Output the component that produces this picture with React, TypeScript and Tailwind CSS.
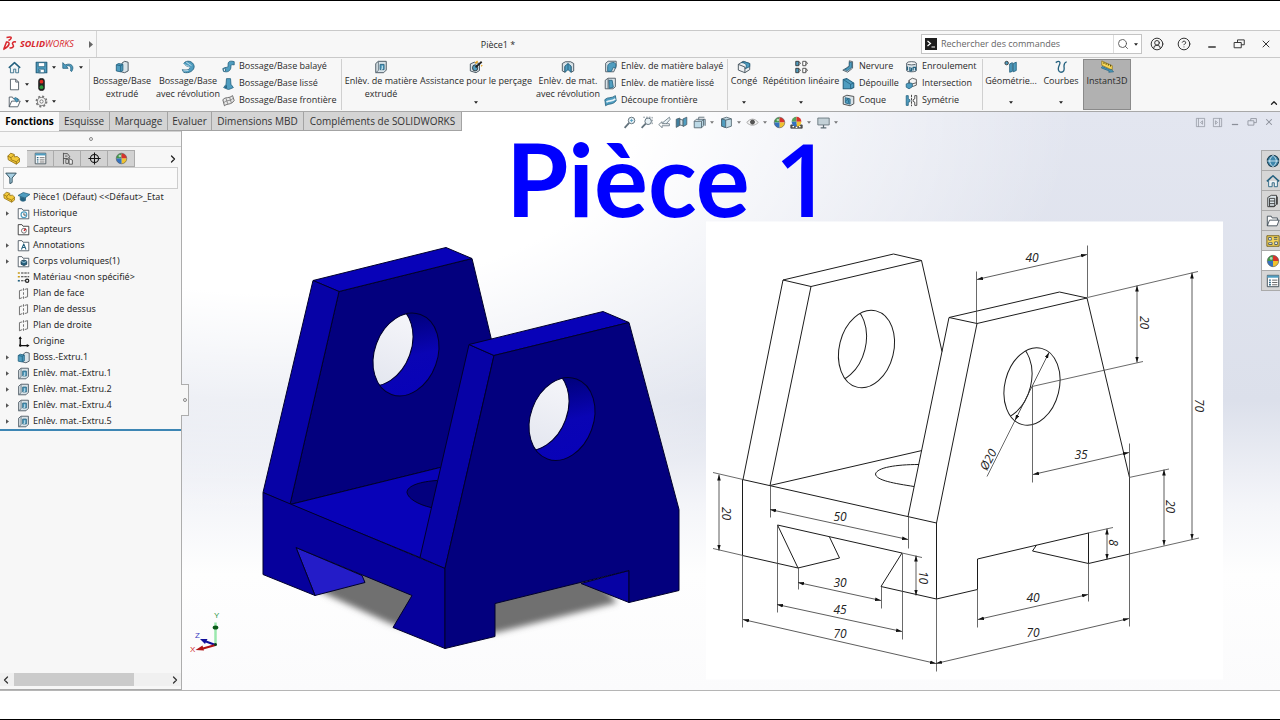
import type { ReactNode } from "react";
import {
  ChevronLeft,
  ChevronRight,
  ChevronUp,
  CircleHelp,
  CircleUserRound,
  Search,
  X,
} from "lucide-react";

/* ---------- small drawings ---------- */

function Ico({ children, className = "size-3.5" }: { children: ReactNode; className?: string }) {
  return (
    <svg
      viewBox="0 0 16 16"
      className={`shrink-0 ${className}`}
      fill="none"
      stroke="#3d4a55"
      strokeWidth="1"
      strokeLinejoin="round"
      aria-hidden="true"
    >
      {children}
    </svg>
  );
}

const BLUE = "#4f9dc0";
const DEEP = "#24617f";
const PALE = "#d9e3e8";

const icons = {
  home: (
    <>
      <path d="M3 8v6.5h4V10h2.5v4.5H13V8" fill="#eef3f6" stroke={DEEP} />
      <path d="M1 8.5 8 2l7 6.5" stroke={DEEP} strokeWidth="1.8" />
    </>
  ),
  save: (
    <>
      <path d="M1.5 1.5h13v13h-13z" fill={BLUE} stroke={DEEP} strokeWidth="1.4" />
      <path d="M4 2h8v5H4zM4.500 10h7v4.500h-7z" fill="#fff" stroke={DEEP} />
      <path d="M6 11v3" stroke={DEEP} strokeWidth="1.6" />
    </>
  ),
  undo: (
    <path
      d="M1 2v7h6.500L5.300 6.700C9 4.500 12 6.500 10.500 12l1.300 1C16 7 11.500 1.500 3.800 4.900z"
      fill={BLUE}
      stroke={DEEP}
    />
  ),
  page: <path d="M3 1.500h6.500L13 5v9.500H3zM9.500 1.500V5H13" fill="#fff" />,
  light: (
    <>
      <rect x="4.500" y="0.500" width="7" height="15" rx="3" fill="#222" stroke="#222" />
      <circle cx="8" cy="4.500" r="2.300" fill="#e02a20" stroke="none" />
      <circle cx="8" cy="11.300" r="2.300" fill="#2c9a3c" stroke="none" />
    </>
  ),
  open: (
    <>
      <path d="M1.500 14.500V2.500h4l1 2H12v3M1.500 14.500l3-7h10.500l-3 7z" fill="#fff" />
      <path d="M7 5c2-3 4-2 4.500.500h2L10.700 9 8 5.500h1.500" fill={BLUE} stroke={DEEP} strokeWidth=".7" />
    </>
  ),
  gear: (
    <>
      <circle cx="8" cy="8" r="6.300" strokeWidth="2" strokeDasharray="2.500 2.450" stroke="#777" />
      <circle cx="8" cy="8" r="5" fill="#f4f4f4" stroke="#666" />
      <circle cx="8" cy="8" r="2" fill="#fff" stroke="#666" />
    </>
  ),
  boss: (
    <>
      <path d="M8 3.500 11 1.500l4 1v10l-4 2-4-1z" fill={PALE} />
      <path d="M1.500 5.500 4 4l5 1v7l-2.500 1.500-5-1z" fill={BLUE} stroke={DEEP} />
      <path d="M1.500 5.500l5 1L9 5M6.500 6.500v7" stroke={DEEP} />
    </>
  ),
  revolve: (
    <>
      <path
        d="M3 4C6-.5 14 1 15 7c.5 5-6 9-12 7l-1.500-3c4 1 8 .5 8.500-2 0-2-4-1-7-5z"
        fill={BLUE}
        stroke={DEEP}
      />
      <path d="M3 4c2 3 7 2 7 5M6 2.500l6 4M2.500 12.500l6-.5" stroke="#cfe6f0" />
    </>
  ),
  sweep: (
    <>
      <path
        d="M1 10.500 5 9c2.500.800 2.500-.500 2.500-4C7.500 1 11 1 15 2v4c-3-.500-4-.500-4 2 0 6-4.500 7.500-9 6z"
        fill={BLUE}
        stroke={DEEP}
      />
      <ellipse cx="3" cy="12.200" rx="1.500" ry="2" fill={PALE} stroke={DEEP} />
    </>
  ),
  loft: (
    <>
      <path d="M5.500 2h5l.500 7 3 4-6 2.500L2 13l3-4z" fill={BLUE} stroke={DEEP} />
      <path d="M6 2.500v7l-3 3.500 3 1z" fill={DEEP} stroke="none" />
    </>
  ),
  boundary: (
    <>
      <path d="M1 7c3-4 8-1 12-5l2 6c-4 6-8 3-12 6.500z" fill="#e8e8e8" stroke="#555" />
      <path d="M2.500 10.500c4-4 8-1 11.500-5.500M5 5.500l2 6.500M9.500 4.500l2 6.500" stroke="#777" />
    </>
  ),
  cut: (
    <>
      <path d="M2 4 5 1.500h9v10L11 14.500H2z" fill={PALE} />
      <path d="M5 1.500V12l-3 2.500" stroke="#60707a" />
      <path d="M7 5h4.500v6H7z" fill={BLUE} stroke={DEEP} />
      <path d="M9.500 6.500v4H8" stroke="#e6f3f8" />
    </>
  ),
  hole: (
    <>
      <path d="M1.500 4.500 6 2.500l6 1.500v8L8 14.500l-6.500-2z" fill={PALE} />
      <ellipse cx="7" cy="9" rx="3" ry="3.500" fill={BLUE} stroke="#333" />
      <path d="m7.500 8.500 7-6.500" stroke="#222" strokeWidth="2" />
      <path d="m9 1 .5 2M14 6l1 1M7 3l2 .5" stroke="#e9a620" strokeWidth="1.800" />
    </>
  ),
  cutRev: (
    <>
      <path d="M1.500 4 5 2l6 0 3.500 2v8.500l-3 1.500V7.500L8 5 4.500 7.500V14l-3-1.500z" fill={PALE} />
      <path d="M4.500 7 8 4l3.500 3v7L8 11l-3.500 3z" fill={BLUE} stroke={DEEP} />
      <path d="M8 4v7" stroke={DEEP} />
    </>
  ),
  cutSweep: (
    <>
      <path d="M2 4 5 1.500h10v6L12 14.500H2z" fill={PALE} />
      <path d="M4.500 14V8c0-3 3-5 8-5l2 2v5l-3-1-2.500 5z" fill={BLUE} stroke={DEEP} />
    </>
  ),
  cutLoft: (
    <>
      <path d="M1.500 4 5 1.500h9v10.500L11 14.500H1.500z" fill={PALE} />
      <path d="M6 4h4l1.500 8.500-5 1.500z" fill={BLUE} stroke={DEEP} />
      <path d="M5 2v12" />
    </>
  ),
  cutBound: (
    <>
      <path d="M1 7c4-4 8-1 13-5l1 6c-4 6-9 3-13 6.500z" fill={BLUE} stroke={DEEP} />
      <path d="M3 10c4-3 6 0 11-4" stroke="#e6f3f8" strokeWidth="2" />
    </>
  ),
  fillet: (
    <>
      <path d="M1.500 5 7 1.500l7.500 2.500v7L9 14.500l-7.500-3z" fill="#eef1f3" />
      <path d="M5 3c5 0 7 3 4.500 7l5-2.500V4L8.500 2z" fill={BLUE} stroke={DEEP} />
      <path d="M1.500 5 9 8v6.500" />
    </>
  ),
  pattern: (
    <>
      <path d="M2 1.500h3.500v5H2zM2 9.500h3.500v5H2z" fill={BLUE} stroke="#333" />
      <path d="M10 1.500h3.500v5H10zM10 9.500h3.500v5H10z" fill="#fff" stroke="#444" />
      <path d="m5.500 2 2 1.500-2 2M5.500 10l2 1.500-2 2M13.500 2l2 1.500-2 2M13.500 10l2 1.500-2 2" stroke="#444" />
    </>
  ),
  rib: (
    <>
      <path d="m9 1 4 1v8l-6 5-6-2.500 5-3L9 7z" fill={PALE} />
      <path d="M9 3v5l-6 4 4 1 5-4V3z" fill={BLUE} stroke={DEEP} />
    </>
  ),
  draft: (
    <>
      <path d="M1.500 3 6 2l8.500 5.500V13L11 14.500H1.500z" fill={BLUE} stroke={DEEP} strokeWidth="1.300" />
      <path d="m1.500 3 9 6v5.500M10.500 9l4-1.500" stroke={DEEP} />
    </>
  ),
  shell: (
    <>
      <path d="M1.500 3.500 6 1.500l8.500 1.500V12L10 14.500l-8.500-2z" fill={PALE} stroke="#333" />
      <path d="M4 4.500 10 6v6.500L4 11z" fill={BLUE} stroke={DEEP} />
      <path d="m7 5 1.500 6M4 9l4-3.500" stroke={DEEP} />
    </>
  ),
  wrap: (
    <>
      <path d="M2 4v9c0 2 12 2 12 0V4" fill={PALE} />
      <ellipse cx="8" cy="4" rx="6" ry="2" fill="#f6f6f6" />
      <path d="M3 8v4.500M6 8.500v5h2v-4M10 13V9h3v4" stroke={DEEP} strokeWidth="1.500" />
    </>
  ),
  intersect: (
    <>
      <path d="M5 4 9 1.500l5 1.500v7l-4 1.500-5-1z" fill="#f4f4f4" stroke="#444" />
      <path d="M1.500 8.500 5 7l4 1v4l-4 2.500-3.500-2z" fill={BLUE} stroke={DEEP} />
      <path d="M5 4v4M9 8.500l5-1.500" stroke="#444" />
    </>
  ),
  mirror: (
    <>
      <path d="M1.500 2v12M1.500 2h2.500v4l2 1v2.500L4 10v4H1.500" fill={BLUE} stroke={DEEP} />
      <path d="M8 1v14" stroke="#222" strokeDasharray="3 1" />
      <path d="M14.500 2v12H12v-4l-2-1V7l2-1V2z" fill="#fff" stroke="#333" />
    </>
  ),
  refgeo: (
    <>
      <circle cx="3" cy="3.500" r="2" fill={BLUE} stroke="#333" />
      <path d="m6.500 4.500 3-1.500v10L6.500 14zM10.500 4 14 2.500v9.500l-3.500 1.500z" fill={BLUE} stroke={DEEP} />
    </>
  ),
  curves: (
    <path
      d="M2 3c4-3 6-1 4 3-2 4-1 8 2 8s4-2 3.500-6C11 4 12 3 14.500 2"
      stroke={DEEP}
      strokeWidth="1.500"
    />
  ),
  instant: (
    <>
      <path d="m2 1 12 5.500v5L2 6z" fill="#f7d858" stroke="#8a7018" strokeWidth=".8" />
      <path d="m4.500 2.500v2M7 3.500v2M9.500 4.500v2M12 5.500v2" stroke="#4b3d08" />
      <path d="m1.500 9 9 3.500-.5 1.500 5.500-.5-3-3-.5 1-9.500-4z" fill={BLUE} stroke={DEEP} strokeWidth=".8" />
    </>
  ),
  zoomFit: (
    <>
      <circle cx="10.500" cy="5.500" r="4" fill="#e9f2f6" stroke="#62727c" strokeWidth="1.200" />
      <path d="M7.500 8.500 2 14.500" stroke="#62727c" strokeWidth="2.200" />
      <path d="M8.500 5.500h4M10.500 3.500v4" stroke={BLUE} />
    </>
  ),
  zoomArea: (
    <>
      <circle cx="10" cy="6.500" r="4" fill="#e9f2f6" stroke="#62727c" strokeWidth="1.200" />
      <path d="M7 9.500 2 14.500" stroke="#62727c" strokeWidth="2.200" />
      <path d="M4 1.500h11v9" stroke="#62727c" strokeDasharray="2 1.500" />
    </>
  ),
  prevView: (
    <>
      <path d="M14 1.500 6 8l3 3 6-7z" fill="#e9f2f6" stroke="#62727c" />
      <path d="M1 10.500 5 7v2.500h9v2.500H5v2.500z" fill="#fff" stroke="#62727c" />
    </>
  ),
  section: (
    <>
      <path d="M1.500 4 6 2.500v9L1.500 14z" fill="#3f7f9f" stroke="#4a5c68" />
      <path d="m6 4 4 1v7l-4-1z" fill={PALE} stroke="#4a5c68" />
      <path d="m10 3.500 4.500-2v9L10 13z" fill={BLUE} stroke="#4a5c68" />
    </>
  ),
  orient: (
    <>
      <path d="M4 4h11v8M4 4 1.500 6.500v8h9V6.500h-9M10.500 6.500 13 4V12l-2.500 2.500" fill="#bcd9e6" stroke="#4a5c68" />
      <path d="M7 4V1.500M7 1.500h7" stroke="#4a5c68" />
    </>
  ),
  style: (
    <>
      <path d="M2 3.500 8 1.500l6 2v9l-6 2-6-2z" fill="#c4dce6" stroke="#4a5c68" />
      <path d="m2 3.500 5 1.500v9.200l-5-1.700z" fill={BLUE} stroke="#4a5c68" />
      <path d="m7 5 7-1.500" stroke="#4a5c68" />
    </>
  ),
  eye: (
    <>
      <path d="M1 8c4-5.500 10-5.500 14 0-4 4.500-10 4.500-14 0z" fill="#f2f2f2" stroke="#999" />
      <circle cx="8" cy="7.500" r="2.500" fill="#555" stroke="#444" />
    </>
  ),
  ball: (
    <>
      <path d="M8 8V1.500A6.500 6.500 0 0 0 1.500 8z" fill="#3f9a4b" stroke="none" />
      <path d="M8 8V1.500A6.500 6.500 0 0 1 14.500 8z" fill="#d8322c" stroke="none" />
      <path d="M8 8v6.500A6.500 6.500 0 0 0 14.500 8z" fill="#f0c22e" stroke="none" />
      <path d="M8 8v6.500A6.500 6.500 0 0 1 1.500 8z" fill="#3472c0" stroke="none" />
      <circle cx="8" cy="8" r="6.500" stroke="#555" strokeWidth=".7" />
      <circle cx="6" cy="5" r="1.600" fill="#fff" fillOpacity=".6" stroke="none" />
    </>
  ),
  scene: (
    <>
      <path d="M1 11h14v4H1z" fill="#555" stroke="#444" />
      <path d="M8 7V1A6 6 0 0 0 2 7z" fill="#58a05a" stroke="none" />
      <path d="M8 7V1a6 6 0 0 1 6 6z" fill="#d8322c" stroke="none" />
      <path d="M8 7v6a6 6 0 0 0 6-6z" fill="#f0c22e" stroke="none" />
      <path d="M8 7v6a6 6 0 0 1-6-6z" fill="#3472c0" stroke="none" />
      <path d="M3 13h2M7 14h2M11 13h2" stroke="#fff" strokeWidth="1.500" />
    </>
  ),
  screen: (
    <>
      <path d="M1 2.500h14v8.500H1z" fill="#c3d0d7" stroke="#5c6a73" />
      <path d="M8 11v3M4.500 14.500h7" stroke="#5c6a73" strokeWidth="1.500" />
    </>
  ),
  part: (
    <>
      <path d="M1 5 4.500 1.500 9 3v3l3.500-.500L15.500 8v4l-4 3L1.500 9.500z" fill="#f3c93a" stroke="#8f6d10" />
      <path d="m1 5 4 2v2.500l6.500 2.500v3M5 7l3-3M11.500 12l4-3.500" stroke="#8f6d10" />
    </>
  ),
  list: (
    <>
      <path d="M1.500 1.500h13v13h-13z" fill="#fff" stroke="#37474f" />
      <path d="M1.500 3h13" stroke={BLUE} strokeWidth="2.500" />
      <path d="M3.500 7h2M3.500 9.700h2M3.500 12.300h2" stroke={DEEP} strokeWidth="1.500" />
      <path d="M7 7h6M7 9.700h6M7 12.300h6" stroke="#555" />
    </>
  ),
  config: (
    <>
      <path d="M3 1v14M3 2h5l3 4-3 2H3M5 5h3" stroke="#444" />
      <path d="M6 9h3v5H6zM10 8l4 2v5h-4z" fill="#eee" stroke="#444" />
    </>
  ),
  target: (
    <>
      <circle cx="8" cy="8" r="5" stroke="#111" strokeWidth="1.300" />
      <path d="M8 .5v15M.5 8h15" stroke="#111" strokeWidth="1.300" />
    </>
  ),
  funnel: <path d="M1 1.500h14L9.500 8v6l-3 1.500V8z" fill="#a8d0e3" stroke="#31505f" strokeWidth="1.300" />,
  cap: (
    <>
      <path d="M0 6 7 2l9 2.500L9 9.500z" fill={BLUE} stroke={DEEP} />
      <path d="M3 8v4c2 2 5 2 7 .5V9L9 9.500z" fill={DEEP} stroke={DEEP} />
    </>
  ),
  folderHist: (
    <>
      <path d="M1.500 14.500V2H6l1.500 2h7v10.500z" fill="#fff" />
      <circle cx="8.500" cy="9.500" r="3.500" stroke={BLUE} strokeWidth="1.500" />
      <path d="M8.500 7.500v2.500H11" stroke="#333" />
    </>
  ),
  folderSensor: (
    <>
      <path d="M1.500 14.500V2H6l1.500 2h7v10.500z" fill="#fff" stroke="#222" />
      <circle cx="8.500" cy="9.500" r="3" stroke="#555" />
      <path d="m8.500 9.500 2.500-2.500" stroke="#c8202a" strokeWidth="1.800" />
    </>
  ),
  folderNote: (
    <>
      <path d="M1.500 14.500V2H6l1.500 2h7v10.500z" fill="#fff" />
      <path d="m5.500 13 2.800-7 2.800 7M6.500 10.500h3.600" stroke={DEEP} strokeWidth="1.300" />
    </>
  ),
  folderBody: (
    <>
      <path d="M1.500 14.500V2H6l1.500 2h7v10.500z" fill="#fff" />
      <path d="M5 7.500 8.500 6 12 7.500v4L8.500 13 5 11.500z" fill={DEEP} stroke="#12384c" />
      <path d="m5.500 8 3 1.200 3-1.200" stroke="#bfe0ee" />
    </>
  ),
  material: (
    <>
      <path d="M1 2.500h2.500M1 7h2.500" stroke="#c89a16" strokeWidth="2" />
      <path d="M1 12h2.500" stroke={DEEP} strokeWidth="2" />
      <path d="M5 2.500h10M5 7h10M5 12h5" stroke="#333" strokeWidth="1.300" strokeDasharray="3 1" />
      <circle cx="12.500" cy="12" r="2" stroke="#222" strokeWidth="1.500" />
    </>
  ),
  plane: (
    <path d="M6.500 3.500 3 4.500v10L6.500 13M9.500 3 13 2v10l-3.500 1M8 1.500v3M8 6.500v3M8 11.500v3" stroke="#555" />
  ),
  origin: (
    <>
      <path d="M4 2.500V13h10" stroke="#111" strokeWidth="1.600" />
      <path d="m2 5 2-3.500L6 5zM12 11l3.500 2-3.500 2z" fill="#111" stroke="none" />
      <circle cx="4" cy="13" r="1.500" fill="#111" stroke="none" />
    </>
  ),
  globe: (
    <>
      <circle cx="8" cy="8" r="6.500" fill="#3e87ab" stroke="#1c3f52" strokeWidth="1.200" />
      <path d="M1.500 8h13M8 1.500c-5 4-5 9 0 13M8 1.500c5 4 5 9 0 13" stroke="#d7ecf5" />
    </>
  ),
  library: (
    <>
      <path d="M2 4 6 1.500h6V12l-3 2.500H2z" fill={PALE} stroke="#333" />
      <path d="M4 5h6v9H4zM4 8h6M4 11h6M13 3v9" stroke="#333" />
    </>
  ),
  folder: <path d="M1.500 13.500V2.500H6l1 2h6v2.500M1.500 13.500l2.500-6.500h11l-2.500 6.500z" fill="#fff" />,
  palette: (
    <>
      <path d="M1 2h14v12H1z" fill="#f3d35b" stroke="#6e5a12" />
      <path d="M3 4h3v3H3zM9 4h4M9 6h4M3 10h4v2H3zM10 9h3v3h-3z" fill="#fff" stroke="#44555e" />
    </>
  ),
  paneL: <path d="M2 2h12v12H2zM5 2v12M11 5.500 8 8l3 2.500z" stroke="#8b8f99" />,
  paneR: <path d="M2 2h12v12H2zM11 2v12M5 5.500 8 8l-3 2.500z" stroke="#8b8f99" />,
  min: <path d="M3 12h10" stroke="currentColor" strokeWidth="2" />,
  restore: <path d="M6 6V2.500h9V9h-4M1.500 6H11v7H1.500z" stroke="currentColor" strokeWidth="1.300" />,
};

type IconName = keyof typeof icons;

function Glyph({ name, className }: { name: IconName; className?: string }) {
  return <Ico className={className}>{icons[name]}</Ico>;
}

function Caret({ className = "" }: { className?: string }) {
  return (
    <svg viewBox="0 0 6 4" className={`h-[3px] w-1 shrink-0 ${className}`} aria-hidden="true">
      <path d="M0 0h6L3 4z" fill="#222" />
    </svg>
  );
}

/* ---------- title bar ---------- */

function TitleBar() {
  return (
    <header className="flex h-7 shrink-0 items-stretch border-y border-[#c9c9c9] bg-[#f7f7f7]">
      <div className="flex w-[97px] items-center border-r border-[#d4d4d4] pl-[3px]">
        <svg viewBox="0 0 14 16" className="h-4 w-3.5" fill="none" stroke="#d8262c" strokeWidth="1.500" aria-hidden="true">
          <path d="M3.500 1.500 7 1c2 0 1.500 2-1.500 3.500M1 12.500 3.500 6c4-.5 3.500 4-2.500 7z" />
          <path d="M13 6c-3-.6-4.500 1-3 2.800 1.500 2-.5 3.400-3.500 3" />
        </svg>
        <span className="ml-[3px] w-[69px] text-[9px] italic text-[#d8262c]">
          <b>SOLID</b>WORKS
        </span>
        <button aria-label="Menu" className="flex items-center">
          <svg viewBox="0 0 4 7" className="h-[7px] w-1" aria-hidden="true">
            <path d="M0 0v7l4-3.500z" fill="#666" />
          </svg>
        </button>
      </div>
      <h1 className="flex flex-1 items-center justify-center pr-[22px] pt-px text-[9px]">Pièce1 *</h1>
      <div className="flex items-center">
        <label className="flex h-5 w-[221px] items-center border border-[#c4c4c4] bg-white pl-[3px]">
          <svg viewBox="0 0 12 12" className="size-3 shrink-0" aria-hidden="true">
            <path d="M0 0h12v12H0z" fill="#1e1e1e" />
            <path d="m2.500 3 3 2.500-3 2.500M6.500 9H10" fill="none" stroke="#fff" strokeWidth="1.200" />
          </svg>
          <input
            type="text"
            aria-label="Rechercher des commandes"
            placeholder="Rechercher des commandes"
            className="ml-1 min-w-0 flex-1 bg-transparent text-[9px] outline-none placeholder:text-[#666]"
          />
          <span className="flex h-full w-7 items-center justify-center gap-[5px] border-l border-[#ddd]">
            <Search className="size-3 text-[#555]" strokeWidth={1.8} />
            <Caret />
          </span>
        </label>
        <div className="flex items-center text-[#333]">
          <button aria-label="Compte" className="ml-2 flex w-[27px] justify-start">
            <CircleUserRound className="size-3.5" strokeWidth={1.700} />
          </button>
          <button aria-label="Aide" className="flex w-[29px] justify-start">
            <CircleHelp className="size-3.5" strokeWidth={1.700} />
          </button>
          <button aria-label="Réduire" className="flex w-[27px]">
            <Glyph name="min" className="size-3" />
          </button>
          <button aria-label="Restaurer" className="flex w-[27px]">
            <Glyph name="restore" className="size-3" />
          </button>
          <button aria-label="Fermer" className="flex w-5">
            <X className="size-3" strokeWidth={2} />
          </button>
        </div>
      </div>
    </header>
  );
}

/* ---------- ribbon ---------- */

function BigCommand({
  icon,
  lines,
  width,
  menu = false,
  active = false,
}: {
  icon: IconName;
  lines: string[];
  width: string;
  menu?: boolean;
  active?: boolean;
}) {
  return (
    <button
      className={`flex shrink-0 flex-col items-center whitespace-nowrap leading-[13px] ${width} ${
        active ? "border border-[#8a8a8a] bg-[#b1b1b1]" : "pt-px"
      }`}
    >
      <Glyph name={icon} />
      {lines.map((line) => (
        <span key={line}>{line}</span>
      ))}
      {menu && <Caret className="mt-3.5" />}
    </button>
  );
}

function CommandList({ items, width }: { items: [IconName, string][]; width: string }) {
  return (
    <ul className={`flex shrink-0 flex-col justify-between pb-[3px] ${width}`}>
      {items.map(([icon, label]) => (
        <li key={label}>
          <button className="flex items-center gap-1 whitespace-nowrap leading-[14px]">
            <Glyph name={icon} className="size-[13px]" />
            {label}
          </button>
        </li>
      ))}
    </ul>
  );
}

const quick: [IconName, string, boolean][][] = [
  [["home", "Accueil", false], ["save", "Enregistrer", true], ["undo", "Annuler", true]],
  [["page", "Nouveau", true], ["light", "Reconstruire", false]],
  [["open", "Ouvrir", true], ["gear", "Options", true]],
];

function Ribbon() {
  return (
    <nav className="flex h-[54px] shrink-0 border-b border-[#a8a8a8] bg-[#f7f7f7] text-[9px]">
      <div className="my-px flex w-[90px] shrink-0 flex-col justify-around border-r border-[#d0d0d0] pl-2">
        {quick.map((row) => (
          <div key={row[0][1]} className="flex">
            {row.map(([icon, label, menu]) => (
              <button key={label} aria-label={label} className="flex w-[27px] items-center gap-1">
                <Glyph name={icon} className="size-[13px]" />
                {menu && <Caret />}
              </button>
            ))}
          </div>
        ))}
      </div>
      <div className="my-px flex shrink-0 border-r border-[#d0d0d0]">
        <BigCommand icon="boss" lines={["Bossage/Base", "extrudé"]} width="w-16" />
        <BigCommand icon="revolve" lines={["Bossage/Base", "avec révolution"]} width="w-[68px]" />
        <CommandList
          width="w-[119px]"
          items={[
            ["sweep", "Bossage/Base balayé"],
            ["loft", "Bossage/Base lissé"],
            ["boundary", "Bossage/Base frontière"],
          ]}
        />
      </div>
      <div className="my-px flex shrink-0 border-r border-[#d0d0d0]">
        <BigCommand icon="cut" lines={["Enlèv. de matière", "extrudé"]} width="w-[78px]" />
        <BigCommand icon="hole" lines={["Assistance pour le perçage"]} width="w-28" menu />
        <BigCommand icon="cutRev" lines={["Enlèv. de mat.", "avec révolution"]} width="w-[72px]" />
        <CommandList
          width="w-[123px]"
          items={[
            ["cutSweep", "Enlèv. de matière balayé"],
            ["cutLoft", "Enlèv. de matière lissé"],
            ["cutBound", "Découpe frontière"],
          ]}
        />
      </div>
      <div className="my-px flex shrink-0 border-r border-[#d0d0d0]">
        <BigCommand icon="fillet" lines={["Congé"]} width="w-8" menu />
        <BigCommand icon="pattern" lines={["Répétition linéaire"]} width="w-[82px]" menu />
        <CommandList
          width="w-[63px]"
          items={[
            ["rib", "Nervure"],
            ["draft", "Dépouille"],
            ["shell", "Coque"],
          ]}
        />
        <CommandList
          width="w-[77px]"
          items={[
            ["wrap", "Enroulement"],
            ["intersect", "Intersection"],
            ["mirror", "Symétrie"],
          ]}
        />
      </div>
      <div className="flex flex-1 py-px">
        <BigCommand icon="refgeo" lines={["Géométrie..."]} width="w-14" menu />
        <BigCommand icon="curves" lines={["Courbes"]} width="w-11" menu />
        <BigCommand icon="instant" lines={["Instant3D"]} width="w-12" active />
        <button aria-label="Replier le ruban" className="ml-auto flex items-end pb-0.5 pr-px">
          <ChevronUp className="size-2.5 text-[#222]" strokeWidth={3} />
        </button>
      </div>
    </nav>
  );
}

/* ---------- tabs and view tools ---------- */

const tabs: [string, string][] = [
  ["Fonctions", "w-[59px]"],
  ["Esquisse", "w-[51px]"],
  ["Marquage", "w-[58px]"],
  ["Evaluer", "w-11"],
  ["Dimensions MBD", "w-[92px]"],
  ["Compléments de SOLIDWORKS", "w-[158px]"],
];

const viewTools: [IconName, string, string][] = [
  ["zoomFit", "Zoom au mieux", "w-[17px]"],
  ["zoomArea", "Zoom fenêtre", "w-[18px]"],
  ["prevView", "Vue précédente", "w-[17px]"],
  ["section", "Vue en coupe", "w-[18px]"],
  ["orient", "Orientation de vue", "w-[27px]"],
  ["style", "Style d'affichage", "w-[26px]"],
  ["eye", "Masquer", "w-[27px]"],
  ["ball", "Apparence", "w-[17px]"],
  ["scene", "Scène", "w-[27px]"],
  ["screen", "Paramètres de vue", "w-6"],
];

function TabRow() {
  return (
    <div className="flex h-[19px] shrink-0 items-stretch">
      <div className="flex shrink-0 text-[10px] text-[#333]" role="tablist">
        {tabs.map(([label, width], i) => (
          <button
            key={label}
            role="tab"
            aria-selected={i === 0}
            className={`whitespace-nowrap text-center ${width} ${
              i === 0
                ? "bg-[#f9f9f9] font-bold text-black"
                : "border-b border-r border-[#a3a3a3] bg-[#d4d4d4]"
            }`}
          >
            {label}
          </button>
        ))}
      </div>
      <div className="flex flex-1 items-center pl-[161px] pt-px">
        {viewTools.map(([icon, label, width]) => (
          <button key={label} aria-label={label} className={`flex items-center gap-1 ${width}`}>
            <Glyph name={icon} className="size-[13px]" />
            {(width === "w-[27px]" || width === "w-[26px]" || width === "w-6") && (
              <Caret className="opacity-60" />
            )}
          </button>
        ))}
      </div>
      <div className="flex items-center pt-px text-[#8b8f99]">
        <button aria-label="Volet gauche" className="flex w-[17px]"><Glyph name="paneL" className="size-[11px]" /></button>
        <button aria-label="Volet droit" className="flex w-[18px]"><Glyph name="paneR" className="size-[11px]" /></button>
        <button aria-label="Réduire le document" className="flex w-[17px]"><Glyph name="min" className="size-2.5" /></button>
        <button aria-label="Restaurer le document" className="flex w-[17px]"><Glyph name="restore" className="size-2.5" /></button>
        <button aria-label="Fermer le document" className="flex w-4"><X className="size-2.5" strokeWidth={2.500} /></button>
      </div>
    </div>
  );
}

/* ---------- feature tree ---------- */

const tree: [IconName, string, boolean][] = [
  ["folderHist", "Historique", true],
  ["folderSensor", "Capteurs", false],
  ["folderNote", "Annotations", true],
  ["folderBody", "Corps volumiques(1)", true],
  ["material", "Matériau <non spécifié>", false],
  ["plane", "Plan de face", false],
  ["plane", "Plan de dessus", false],
  ["plane", "Plan de droite", false],
  ["origin", "Origine", false],
  ["boss", "Boss.-Extru.1", true],
  ["cut", "Enlèv. mat.-Extru.1", true],
  ["cut", "Enlèv. mat.-Extru.2", true],
  ["cut", "Enlèv. mat.-Extru.4", true],
  ["cut", "Enlèv. mat.-Extru.5", true],
];

const panelTabs: [IconName, string][] = [
  ["part", "Arbre de création"],
  ["list", "Propriétés"],
  ["config", "Configurations"],
  ["target", "Cotation"],
  ["ball", "Affichage"],
];

function FeaturePanel() {
  return (
    <aside className="relative flex w-[182px] shrink-0 flex-col border-r border-[#adadad] bg-[#f7f7f7] font-['Noto_Sans','Open_Sans',sans-serif] text-[9px]">
      <div className="flex h-4 items-center justify-center border-y border-[#cfcfcf]">
        <span className="size-1 rounded-full border border-[#888]" />
      </div>
      <div className="mt-[3px] flex h-[17px]">
        {panelTabs.map(([icon, label], i) => (
          <button
            key={label}
            aria-label={label}
            className={`flex w-[27px] items-center justify-center ${
              i === 0 ? "bg-[#f7f7f7]" : "border border-l-0 border-[#ababab] bg-[#d2d2d2]"
            } ${i === 1 ? "border-l" : ""}`}
          >
            <Glyph name={icon} className="size-[13px]" />
          </button>
        ))}
        <button aria-label="Onglets suivants" className="ml-auto flex items-center pr-0.5">
          <ChevronRight className="size-3 text-[#222]" strokeWidth={2.500} />
        </button>
      </div>
      <label className="mx-[3px] flex h-[22px] items-center border border-[#cdcdcd] bg-[#fafafa] pl-px">
        <Glyph name="funnel" className="size-3" />
        <input type="text" aria-label="Filtrer" className="min-w-0 flex-1 bg-transparent outline-none" />
      </label>
      <button className="flex h-4 items-center overflow-hidden whitespace-nowrap pl-[3px] text-left">
        <Glyph name="part" className="size-3" />
        <Glyph name="cap" className="ml-[3px] size-3" />
        <span className="ml-[3px]">Pièce1 (Défaut) &lt;&lt;Défaut&gt;_Etat</span>
      </button>
      <ul>
        {tree.map(([icon, label, nested]) => (
          <li key={label} className="h-4">
            <button className="flex h-4 w-full items-center whitespace-nowrap pl-1.5 text-left">
              <span className="w-[11px]">
                {nested && (
                  <svg viewBox="0 0 4 6" className="h-[5px] w-[3px]" aria-hidden="true">
                    <path d="M0 0v6l4-3z" fill="#555" />
                  </svg>
                )}
              </span>
              <Glyph name={icon} className="size-[13px]" />
              <span className="ml-[3px]">{label}</span>
            </button>
          </li>
        ))}
      </ul>
      <div className="h-0.5 bg-[#3d86b4]" />
      <div className="mt-auto flex h-[13px] items-center bg-[#f0f0f0]">
        <ChevronLeft className="size-3 text-[#333]" strokeWidth={2.500} />
        <div className="ml-0.5 h-full w-[120px] bg-[#cbcbcb]" />
        <ChevronRight className="ml-auto size-3 text-[#333]" strokeWidth={2.500} />
      </div>
      <div className="h-1 border-b border-[#aaa]" />
      <div className="absolute -right-2 top-[253px] z-10 flex h-8 w-2 items-center justify-center border border-l-0 border-[#adadad] bg-[#f7f7f7]">
        <span className="size-1 rounded-full border border-[#888]" />
      </div>
    </aside>
  );
}

/* ---------- solid model ---------- */

function Hole({ id, x, y }: { id: string; x: number; y: number }) {
  return (
    <g stroke="#00002c" strokeWidth="1">
      <clipPath id={id}>
        <ellipse cx={x} cy={y} rx="31.500" ry="42.500" transform={`rotate(20 ${x} ${y})`} />
      </clipPath>
      <g clipPath={`url(#${id})`}>
        <rect x={x - 40} y={y - 45} width="80" height="90" fill="url(#bore)" stroke="none" />
        <ellipse
          cx={x - 26}
          cy={y - 10}
          rx="31.500"
          ry="42.500"
          transform={`rotate(20 ${x - 26} ${y - 10})`}
          fill="url(#through)"
        />
      </g>
      <ellipse cx={x} cy={y} rx="31.500" ry="42.500" transform={`rotate(20 ${x} ${y})`} fill="none" />
    </g>
  );
}

function SolidModel() {
  return (
    <g strokeLinejoin="round">
      <defs>
        <linearGradient id="bore" x1="0.300" y1="0" x2="0.500" y2="1">
          <stop offset="0.100" stopColor="#00007c" />
          <stop offset="0.550" stopColor="#0a04b4" />
          <stop offset="1" stopColor="#0802b8" />
        </linearGradient>
        <linearGradient id="through" x1="0" y1="0" x2="0" y2="1">
          <stop offset="0" stopColor="#f6f6fa" />
          <stop offset="1" stopColor="#e3e6ef" />
        </linearGradient>
        <filter id="soft" x="-20%" y="-20%" width="140%" height="140%">
          <feGaussianBlur stdDeviation="3" />
        </filter>
      </defs>
      <g fill="#707070" filter="url(#soft)">
        <path d="M318 590 365 565 425 585 410 629 390 623z" />
        <path d="M470 634 497 632 617 602 590 570 480 590z" />
      </g>
      <g stroke="#00002c" strokeWidth="1">
        <path d="M581 583 629 570V602z" fill="#0702a4" />
        <path d="M339 291 472 258 530 500 440 467 290 504z" fill="#03007e" />
        <path d="M313 280 446 247 472 258 339 291z" fill="#0802b8" />
        <path d="M313 280 339 291 290 504 263 492z" fill="#0702a6" />
        <path d="M290 504 440 467 460 480 420 557z" fill="#0802b8" />
        <path d="M437 480C421 481 407 485 407 492 408 498 418 504 431 507L445 490z" fill="#03007e" />
        <path d="M469 344 494 355 445 568 420 557z" fill="#0702a6" />
        <path d="M469 344 603 311 629 322 494 355z" fill="#0802b8" />
        <path d="M296 547 362 575 365 582 315 595z" fill="#241cc8" />
        <path d="M263 492 445 568V648L393 627 412 595 296 547 315 595 263 574z" fill="#06009c" />
        <path
          d="M494 355 629 322 679 509V590L629 602V570L495 603V636L445 648V568z"
          fill="#03007e"
        />
      </g>
      <Hole id="holeBack" x={406} y={354} />
      <Hole id="holeFront" x={562} y={418.500} />
    </g>
  );
}

/* ---------- dimensioned sheet ---------- */

type Dim = {
  from: [number, number];
  to: [number, number];
  label: string;
  at: [number, number];
  turn?: number;
};

const dims: Dim[] = [
  { from: [977, 279], to: [1087, 254], label: "40", at: [1032, 257] },
  { from: [1137, 285], to: [1137, 362], label: "20", at: [1144, 322], turn: 90 },
  { from: [1192, 272], to: [1192, 539], label: "70", at: [1199, 405], turn: 90 },
  { from: [1033, 474], to: [1129, 452], label: "35", at: [1081, 454] },
  { from: [1164, 469], to: [1164, 545], label: "20", at: [1170, 506], turn: 90 },
  { from: [1107, 528], to: [1107, 559], label: "8", at: [1113, 542], turn: 90 },
  { from: [978, 619], to: [1088, 594], label: "40", at: [1033, 597] },
  { from: [936, 663], to: [1129, 618], label: "70", at: [1033, 632] },
  { from: [743, 619], to: [936, 663], label: "70", at: [840, 633] },
  { from: [777, 604], to: [902, 631], label: "45", at: [840, 609] },
  { from: [798, 582], to: [881, 600], label: "30", at: [840, 582] },
  { from: [770, 509], to: [908, 539], label: "50", at: [840, 516] },
  { from: [719, 474], to: [719, 550], label: "20", at: [726, 513], turn: 90 },
  { from: [916, 555], to: [916, 595], label: "10", at: [923, 577], turn: 90 },
  { from: [1049, 352], to: [1015, 420], label: "Ø20", at: [988, 459], turn: -62 },
];

function SheetHole({ id, x, y }: { id: string; x: number; y: number }) {
  return (
    <>
      <clipPath id={id}>
        <ellipse cx={x} cy={y} rx="27.200" ry="39.300" transform={`rotate(14 ${x} ${y})`} />
      </clipPath>
      <ellipse cx={x} cy={y} rx="27.200" ry="39.300" transform={`rotate(14 ${x} ${y})`} />
      <g clipPath={`url(#${id})`}>
        <ellipse
          cx={x - 28}
          cy={y - 6}
          rx="27.200"
          ry="39.300"
          transform={`rotate(14 ${x - 28} ${y - 6})`}
        />
      </g>
    </>
  );
}

function DimensionSheet() {
  return (
    <g>
      <defs>
        <marker id="tip" viewBox="0 0 10 6" refX="10" refY="3" markerWidth="6" markerHeight="4" markerUnits="userSpaceOnUse" orient="auto-start-reverse">
          <path d="M0 0 10 3 0 6z" fill="#111" />
        </marker>
      </defs>
      <rect x="706" y="221" width="517" height="458" fill="#fff" />
      <g fill="none" stroke="#1c1c1c" strokeWidth="1">
        <path d="M743 479 783 279.500 893.500 253.500 921.500 260 942 351M783 279.500 811 286 770 485M811 286 921.500 260" />
        <path d="M908 516 949 317 1059.500 291.500 1087 297.500 977 323 949 317M977 323 936.500 522.500" />
        <path d="M1087 297.500 1129.500 477V553.500L1088.500 563V532.500L977.500 558.500V589L936.500 598.500V522.500L742.500 479V555L798 567.500 777.500 524.500 902 552.500 881 586 936.500 598.500" />
        <path d="M829.500 536.500 839.500 557.500 798 567.500M1036.500 544.500 1032.500 550.500 1088.500 563M770 485 922 450" />
        <path d="M919 464C896 464 877 467 875.500 473.500 876 480 895 483 914 486" />
        <SheetHole id="sheetBack" x={866.500} y={348.500} />
        <SheetHole id="sheetFront" x={1032} y={386} />
      </g>
      <g fill="none" stroke="#444" strokeWidth=".8">
        <path d="M976.500 271V323M1087.500 245V297L1198 271M1032 386 1143 361M1032.500 386V482M1129.500 443V626M1129 477 1169 468.500M1129 553.500 1199 537.500M1088 532.500 1113 527" />
        <path d="M977.500 589V627M1088.500 563V601M936.500 598V671M742.500 555V627M777.500 525V612M902.500 553V639M798.500 567V589M881.500 586V608M770.500 485V517M908.500 516V548" />
        <path d="M713 472 743 479M713 548 743 555M902 552.500 922 557M1015 420 987 476" />
      </g>
      {dims.map(({ from, to, label, at, turn = 0 }) => (
        <g key={`${label}-${at.join("-")}`}>
          <line
            x1={from[0]}
            y1={from[1]}
            x2={to[0]}
            y2={to[1]}
            stroke="#333"
            strokeWidth=".8"
            markerStart="url(#tip)"
            markerEnd="url(#tip)"
          />
          <text
            x={at[0]}
            y={at[1]}
            textAnchor="middle"
            dominantBaseline="central"
            transform={`rotate(${turn} ${at[0]} ${at[1]})`}
            className="fill-[#222] font-['Open_Sans',sans-serif] text-[12px] italic"
          >
            {label}
          </text>
        </g>
      ))}
    </g>
  );
}

function Triad() {
  return (
    <g className="font-['Liberation_Sans',sans-serif] text-[8px]">
      <path d="M215.500 644V622" stroke="#9be8ae" strokeWidth="2.500" />
      <ellipse cx="215.500" cy="627" rx="2.800" ry="2" fill="#0a5a18" />
      <path d="M215.500 644.500 206 641" stroke="#10109a" strokeWidth="2" />
      <path d="m200 638.500 7.500 0-2.500 5z" fill="#10109a" />
      <path d="M215.500 644.500 203 648" stroke="#b01414" strokeWidth="2" />
      <path d="m195.500 649.500 7-4.500 1.500 5z" fill="#b01414" />
      <circle cx="215.500" cy="644" r="1.500" fill="#0a3a18" />
      <text x="214" y="617" fill="#2f9a4a">Y</text>
      <text x="195" y="637" fill="#3a3ac0">Z</text>
      <text x="190" y="651" fill="#d03030">X</text>
    </g>
  );
}

const paneButtons: [IconName, string][] = [
  ["globe", "Communauté"],
  ["home", "Ressources"],
  ["library", "Bibliothèque"],
  ["folder", "Explorateur"],
  ["palette", "Palette de vues"],
  ["ball", "Apparences"],
  ["list", "Propriétés personnalisées"],
];

export default function App() {
  return (
    <div className="flex min-h-screen flex-col border-y border-black bg-white pb-7 pt-[29px] font-['Open_Sans','Noto_Sans',sans-serif] text-[#2a2a2a]">
      <TitleBar />
      <Ribbon />
      <main className="flex flex-1 flex-col border-b border-[#b5b5b5] bg-[radial-gradient(ellipse_62%_70%_at_22%_0%,#ffffff_45%,#ffffff00_100%),linear-gradient(180deg,#e3e6f0_0%,#dce0eb_50%,#f4f5f9_68%,#fefefe_80%,#fbfbfc_100%)]">
        <TabRow />
        <div className="flex flex-1 items-stretch">
          <FeaturePanel />
          <svg
            viewBox="182 131 1079 558"
            className="min-w-0 flex-1 overflow-visible"
            role="img"
            aria-label="Pièce 1"
          >
            <Triad />
            <SolidModel />
            <DimensionSheet />
            <text x="506" y="216" className="fill-[#0000ff] font-['Lato',sans-serif] text-[101px] font-bold">
              Pièce <tspan className="font-['Open_Sans',sans-serif] font-semibold">1</tspan>
            </text>
          </svg>
          <aside className="mt-[19px] flex w-[19px] shrink-0 flex-col self-start border-l border-t border-[#aaa]">
            {paneButtons.map(([icon, label]) => (
              <button
                key={label}
                aria-label={label}
                className={`flex h-5 items-center justify-center border-b border-[#aaa] pl-1 ${
                  icon === "ball" ? "bg-white" : "bg-[#d6d6d6]"
                }`}
              >
                <Glyph name={icon} />
              </button>
            ))}
          </aside>
        </div>
      </main>
    </div>
  );
}
